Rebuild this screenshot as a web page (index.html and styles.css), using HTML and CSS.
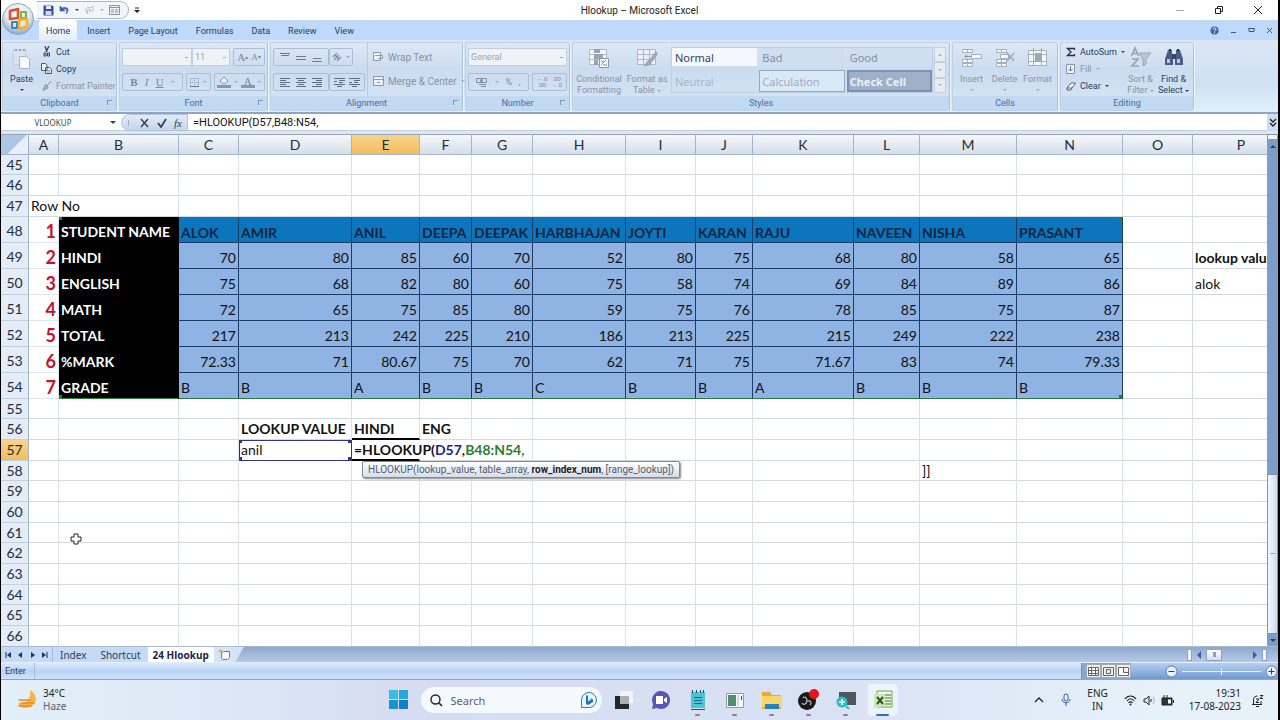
FILE: index.html
```html
<!DOCTYPE html>
<html lang="en">
<head>
  <meta charset="UTF-8" />
  <meta name="viewport" content="width=device-width, initial-scale=1.0"/>
  <title>Hlookup - Microsoft Excel</title>
  <link rel="stylesheet" href="styles.css">
</head>
<body>

<div class="desktop">

  <!-- title bar -->
  <header class="titlebar">
    <button class="office" aria-label="Office Button">
      <svg width="34" height="34" viewBox="0 0 34 34">
        <defs>
          <radialGradient id="orb" cx="50%" cy="30%" r="70%">
            <stop offset="0" stop-color="#fff"/><stop offset=".6" stop-color="#dfe5ee"/><stop offset="1" stop-color="#8fa3c0"/>
          </radialGradient>
        </defs>
        <circle cx="17" cy="17" r="15.5" fill="url(#orb)" stroke="#93a5c0"/>
        <g fill="none" stroke-width="2.6" stroke-linejoin="round">
          <path d="M9 9l8-2v9l-8 1z" stroke="#d9532c"/>
          <path d="M20 10h5v6h-5z" stroke="#7fb241" stroke-width="2"/>
          <path d="M11 20h5v6h-5z" stroke="#3e7fc6" stroke-width="2"/>
          <path d="M18 18l8-1v8l-8 2z" stroke="#f0b323"/>
        </g>
      </svg>
    </button>
    <div class="qat">
      <button aria-label="Save"><svg width="11" height="11" viewBox="0 0 11 11"><path d="M.5 .5h9l1 1v9H.5z" fill="#3d4f9c"/><path d="M3 1h5v3H3z" fill="#eef"/><path d="M2.500 6h6v4h-6z" fill="#cfd8ee"/></svg></button>
      <button aria-label="Undo"><svg width="11" height="11" viewBox="0 0 11 11"><path d="M1 1v5h5L4.500 4.500C7 3 9 5 7 9c4-4 2-8-4-6z" fill="#3f62b5" stroke="#3f62b5" stroke-width=".7"/></svg></button>
      <i class="caret"></i>
      <button aria-label="Redo"><svg width="11" height="11" viewBox="0 0 11 11"><path d="M9 1v5H5l1.500-1.500C4 3 2 5 4 9 0 5 2 1 7 3z" fill="#fff" stroke="#9aa6b8" stroke-width=".7"/></svg></button>
      <i class="caret pale"></i>
      <button aria-label="Form"><svg width="11" height="10" viewBox="0 0 11 10"><path d="M.5 .5h10v9H.5z" fill="#eef2f8" stroke="#8995aa"/><path d="M.5 2.500h10M2 5h3M2 7h3M6 5h3M6 7h3" stroke="#8995aa"/></svg></button>
    </div>
    <button class="qat-more" aria-label="Customize"><svg width="6" height="7" viewBox="0 0 6 7"><path d="M1 1h4" stroke="#222"/><path d="M0 3h6L3 6z" fill="#222"/></svg></button>
    <h1>Hlookup – Microsoft Excel</h1>
    <div class="window-buttons">
      <button aria-label="Minimize"><svg width="10" height="10"><path d="M1 5.500h8" stroke="#aaa"/></svg></button>
      <button aria-label="Restore"><svg width="10" height="10"><path d="M1.500 3.500h5v5h-5zM3.500 3V1.500h5v5H7" fill="none" stroke="#222"/></svg></button>
      <button aria-label="Close"><svg width="10" height="10"><path d="M1 1l8 8M9 1L1 9" stroke="#222"/></svg></button>
    </div>
  </header>

  <nav class="tabs">
    <a class="current" href="#home">Home</a>
    <a href="#insert">Insert</a>
    <a href="#layout">Page Layout</a>
    <a href="#formulas">Formulas</a>
    <a href="#data">Data</a>
    <a href="#review">Review</a>
    <a href="#view">View</a>
    <div class="book-buttons">
      <button aria-label="Help"><svg width="9" height="9" viewBox="0 0 9 9"><circle cx="4.500" cy="4.500" r="4" fill="#3b64b4"/><path d="M3 3.500c0-2 3-2 3 0 0 1-1.500 1-1.500 2M4.500 6.300v1" stroke="#fff" fill="none"/></svg></button>
      <button aria-label="Minimize workbook"><svg width="7" height="7"><path d="M1 5.500h5" stroke="#40598a"/></svg></button>
      <button aria-label="Restore workbook"><svg width="7" height="7"><path d="M.5 1.500h6M1 1v3.500h5V1" fill="none" stroke="#40598a"/></svg></button>
      <button aria-label="Close workbook"><svg width="7" height="7"><path d="M1 1l5 5M6 1L1 6" stroke="#40598a"/></svg></button>
    </div>
  </nav>

  <!-- ribbon -->
  <div class="ribbon">
    <section class="group clipboard">
      <div class="group-body">
        <button class="big on">
          <svg width="20" height="24" viewBox="0 0 20 24"><path d="M1 4h13v15H1z" fill="#d9e2ee" stroke="#c0cbd9"/><path d="M3 3h2v2H3zM7 3h2v2H7zM11 3h2v2h-2z" fill="#9ba6b4"/><path d="M7.500 10.500h7l3 3v9h-10z" fill="#f7f9fc" stroke="#aab5c5"/></svg>
          <span>Paste</span><i class="caret"></i>
        </button>
        <div class="stack">
          <button class="small on"><svg width="11" height="11" viewBox="0 0 11 11"><path d="M4 0l2 6M8 0L5 6" stroke="#33425e" stroke-width="1.300"/><path d="M3 7h2v3H3zM6.500 7h2v3h-2z" fill="none" stroke="#33425e"/></svg>Cut</button>
          <button class="small on"><svg width="11" height="11" viewBox="0 0 11 11"><path d="M.5 .5h4l1.500 2v5H.5zM4.500 4.500h4l2 2v4h-6z" fill="#f4f7fb" stroke="#44587c"/><path d="M6 7.500h3M6 9h3" stroke="#44587c" stroke-width=".6"/></svg>Copy</button>
          <button class="small"><svg width="11" height="11" viewBox="0 0 11 11"><path d="M10 1L6 6M6 5l1 3-5 2.500L4 5z" fill="#aab4c2" stroke="#8b96a6"/></svg>Format Painter</button>
        </div>
      </div>
      <h2>Clipboard<i class="launcher"></i></h2>
    </section>

    <section class="group font">
      <div class="group-body rows">
        <div class="row">
          <div class="joined"><select class="family" aria-label="Font"><option></option></select><select class="size" aria-label="Font size"><option>11</option></select></div>
          <div class="box"><button class="serif">A<sup>▴</sup></button><button class="serif sm">A<sup>▾</sup></button></div>
        </div>
        <div class="row">
          <div class="box wide"><button class="serif"><b>B</b></button><button class="serif"><em>I</em></button><button class="serif"><u>U</u></button><i class="caret pale"></i></div>
          <div class="box"><button aria-label="Borders"><svg width="9" height="9"><path d="M.5 .5h8v8h-8zM4.500 0v9M0 4.500h9" fill="none" stroke="#909db0" stroke-dasharray="1 1"/><path d="M0 8.500h9" stroke="#68758a"/></svg></button><i class="caret pale"></i></div>
          <div class="box wide"><button aria-label="Fill colour"><svg width="14" height="12" viewBox="0 0 14 12"><path d="M3 5l4-4 4 4-4 3z" fill="#eef2f7" stroke="#8793a5"/><path d="M0 9h14v3H0z" fill="#8b96a8"/></svg></button><i class="caret pale"></i><button class="font-colour serif">A</button><i class="caret pale"></i></div>
        </div>
      </div>
      <h2>Font<i class="launcher"></i></h2>
    </section>

    <section class="group alignment">
      <div class="group-body">
        <div class="rows">
          <div class="row tight">
            <div class="box three">
              <button aria-label="Top"><svg width="10" height="10"><path d="M0 1.500h10M1 3.500h8" stroke="#6d7a90"/></svg></button>
              <button aria-label="Middle"><svg width="10" height="10"><path d="M0 4.500h10M0 7.500h10" stroke="#6d7a90"/></svg></button>
              <button aria-label="Bottom"><svg width="10" height="10"><path d="M1 6.500h8M0 9.500h10" stroke="#6d7a90"/></svg></button>
            </div>
            <div class="box"><button aria-label="Orientation"><svg width="12" height="10" viewBox="0 0 12 10"><path d="M1 5l4-4M2 8l5-5M5 9l4-4M3 3l4 4" stroke="#7f8ba0" stroke-width="1.200"/></svg></button><i class="caret pale"></i></div>
          </div>
          <div class="row tight">
            <div class="box three">
              <button aria-label="Left"><svg width="10" height="10"><path d="M0 1.500h10M0 3.500h6M0 5.500h10M0 7.500h6M0 9.500h10" stroke="#5d6b85"/></svg></button>
              <button aria-label="Centre"><svg width="10" height="10"><path d="M0 1.500h10M2 3.500h6M0 5.500h10M2 7.500h6M0 9.500h10" stroke="#5d6b85"/></svg></button>
              <button aria-label="Right"><svg width="10" height="10"><path d="M0 1.500h10M4 3.500h6M0 5.500h10M4 7.500h6M0 9.500h10" stroke="#5d6b85"/></svg></button>
            </div>
            <div class="box two">
              <button aria-label="Decrease indent"><svg width="11" height="10"><path d="M0 1.500h11M5 3.500h6M5 5.500h4M0 7.500h11M3 9.500h5M0 4.500h3" stroke="#5d6b85"/></svg></button>
              <button aria-label="Increase indent"><svg width="11" height="10"><path d="M0 1.500h11M5 3.500h6M5 5.500h4M0 7.500h11M3 9.500h5M0 5.500h3" stroke="#5d6b85"/></svg></button>
            </div>
          </div>
        </div>
        <div class="rows divided">
          <button class="small tall"><svg width="11" height="10"><path d="M.5 .5h7v8h-7zM2 3.500h7.500v3H5" fill="#eef2f8" stroke="#8b98ac"/></svg>Wrap Text</button>
          <button class="small tall"><svg width="11" height="10"><path d="M.5 .5h10v9H.5zM.5 3.500h10M4 6.500h3" fill="#eef2f8" stroke="#8b98ac"/></svg>Merge &amp; Center <i class="caret pale"></i></button>
        </div>
      </div>
      <h2>Alignment<i class="launcher"></i></h2>
    </section>

    <section class="group number">
      <div class="group-body rows">
        <select class="format" aria-label="Number format"><option>General</option></select>
        <div class="row">
          <div class="box wide"><button aria-label="Currency"><svg width="12" height="10"><path d="M.5 1.500h10v4H.5zM3 7.500h7M5 9.500h5" fill="none" stroke="#7f8ca2"/><circle cx="5.500" cy="3.500" r="1.500" fill="#7f8ca2"/></svg></button><i class="caret pale"></i><button>%</button><button>,</button></div>
          <div class="box wide"><button class="dec">←.0<br>.00</button><button class="dec">.00<br>→.0</button></div>
        </div>
      </div>
      <h2>Number<i class="launcher"></i></h2>
    </section>

    <section class="group styles">
      <div class="group-body">
        <button class="big">
          <svg width="22" height="24" viewBox="0 0 22 24"><path d="M1.500 3.500h17v15h-17z" fill="#f3f6fa" stroke="#b2bcc9"/><path d="M1 8.500h18M1 13.500h18" stroke="#b2bcc9"/><path d="M6 3h6v4H6zM6 8h9v5H6zM6 14h4v5H6z" fill="#98a3b3"/><path d="M11.500 12.500h9v9h-9z" fill="#f7f9fb" stroke="#8d99aa"/><path d="M13 19l5-5M13 15l3 1M15 19h4" stroke="#7f8b9d"/></svg>
          <span>Conditional<br>Formatting <i class="caret pale"></i></span>
        </button>
        <button class="big">
          <svg width="22" height="24" viewBox="0 0 22 24"><path d="M1.500 3.500h18v15h-18zM1 8.500h18M1 13.500h18M7.500 3v16M13.500 3v16" fill="#edf1f6" stroke="#adb8c7"/><path d="M20 5l-7 9c-2 0-3 4-6 6 5 1 8-1 9-4l6-8z" fill="#9da8b8"/></svg>
          <span>Format as<br>Table <i class="caret pale"></i></span>
        </button>
        <div class="gallery">
          <button class="normal">Normal</button><button class="bad">Bad</button><button class="good">Good</button>
          <button class="neutral">Neutral</button><button class="calculation">Calculation</button><button class="check">Check Cell</button>
        </div>
        <div class="gallery-scroll"><button aria-label="Up"><i class="caret pale up"></i></button><button aria-label="Down"><i class="caret pale"></i></button><button aria-label="More"><i class="caret pale line"></i></button></div>
      </div>
      <h2>Styles</h2>
    </section>

    <section class="group cells">
      <div class="group-body">
        <button class="big">
          <svg width="22" height="24" viewBox="0 0 22 24"><path d="M1.500 3.500h10v3h-10zM1.500 13.500h10v3h-10zM1.500 17.500h10v3h-10zM6.500 3v3M6.500 13v8M10.500 8.500h10v4h-10z" fill="#f5f8fb" stroke="#a4b0c0"/><path d="M4 10.500h6M4 10.500l2-2M4 10.500l2 2" stroke="#8794a8"/></svg>
          <span>Insert</span><i class="caret pale"></i>
        </button>
        <button class="big">
          <svg width="22" height="24" viewBox="0 0 22 24"><path d="M2.500 3.500h10v3h-10zM2.500 13.500h10v3h-10zM2.500 17.500h10v3h-10zM7.500 3v3M7.500 13v8M6.500 8.500h8v4h-8z" fill="#f5f8fb" stroke="#a4b0c0"/><path d="M13 7l7 8M20 7l-7 8" stroke="#9da9b9" stroke-width="1.500"/></svg>
          <span>Delete</span><i class="caret pale"></i>
        </button>
        <button class="big">
          <svg width="22" height="24" viewBox="0 0 22 24"><path d="M1.500 4.500h18v15h-18zM6.500 2v18M14.500 2v18M1 8.500h19M1 15.500h19" fill="#f5f8fb" stroke="#a4b0c0"/><path d="M8 7h6v9H8z" fill="#9ba7b8"/></svg>
          <span>Format</span><i class="caret pale"></i>
        </button>
      </div>
      <h2>Cells</h2>
    </section>

    <section class="group editing">
      <div class="group-body">
        <div class="stack">
          <button class="small on"><svg width="10" height="10"><path d="M8.500 3V1.500H1.500L5 5 1.500 8.500h7V7" fill="none" stroke="#28334a" stroke-width="1.300"/></svg>AutoSum <i class="caret"></i></button>
          <button class="small"><svg width="10" height="10"><path d="M.5 .5h8v9h-8z" fill="#edf1f6" stroke="#8995a8"/><path d="M4.500 2v5M2.500 5l2 2 2-2" fill="none" stroke="#69778e"/></svg>Fill <i class="caret pale"></i></button>
          <button class="small on"><svg width="10" height="10"><path d="M1 7l4-5h4.500L6 7zM1 7v2h4l1-2" fill="#fff" stroke="#52627f"/></svg>Clear <i class="caret"></i></button>
        </div>
        <button class="big">
          <svg width="22" height="24" viewBox="0 0 22 24"><path d="M1.500 10L5 2l3.500 8M3 7.500h4M2 13h6l-6 7h7" fill="none" stroke="#99a4b5" stroke-width="1.700"/><path d="M9 7h12l-5 6v5l-3 2v-7z" fill="#bcc6d3" stroke="#9aa6b6"/></svg>
          <span>Sort &amp;<br>Filter <i class="caret pale"></i></span>
        </button>
        <button class="big on">
          <svg width="22" height="24" viewBox="0 0 22 24"><path d="M5 4h4v4l1 3v8H2v-6zM13 4h4l3 9v6h-8v-8l1-3z" fill="#4c5c87"/><path d="M9 8h4v5H9z" fill="#344468"/><path d="M4 13h3v4H4zM14 13h3v4h-3z" fill="#b9c6e4"/><path d="M6 4h2M14 4h2" stroke="#222d49" stroke-width="2"/></svg>
          <span>Find &amp;<br>Select <i class="caret"></i></span>
        </button>
      </div>
      <h2>Editing</h2>
    </section>
  </div>

  <!-- formula bar -->
  <div class="formula-bar">
    <input class="name-box" aria-label="Name box" value="VLOOKUP">
    <button class="name-drop" aria-label="Names"><i class="caret"></i></button>
    <div class="fx">
      <i class="grip"></i>
      <button aria-label="Cancel"><svg width="10" height="10"><path d="M1 1l7 8M8 1L1 9" stroke="#333c4c" stroke-width="1.400"/></svg></button>
      <button aria-label="Enter"><svg width="10" height="10"><path d="M1 5l3 4 5-8" fill="none" stroke="#333c4c" stroke-width="1.700"/></svg></button>
      <button aria-label="Insert function" class="serif"><em>fx</em></button>
    </div>
    <input class="formula" aria-label="Formula" value="=HLOOKUP(D57,B48:N54,">
    <button class="expand" aria-label="Expand"><svg width="8" height="10"><path d="M1 1l3 3 3-3M1 5l3 3 3-3" fill="none" stroke="#222" stroke-width="1.300"/></svg></button>
  </div>

  <!-- worksheet -->
  <main class="sheet">
    <div class="grid">
      <table>
        <colgroup>
          <col class="c-head"><col class="c-a"><col class="c-b"><col class="c-c"><col class="c-d"><col class="c-e"><col class="c-f"><col class="c-g"><col class="c-h"><col class="c-i"><col class="c-j"><col class="c-k"><col class="c-l"><col class="c-m"><col class="c-n"><col class="c-o"><col class="c-p">
        </colgroup>
        <thead>
          <tr><th class="corner"></th><th>A</th><th>B</th><th>C</th><th>D</th><th class="active">E</th><th>F</th><th>G</th><th>H</th><th>I</th><th>J</th><th>K</th><th>L</th><th>M</th><th>N</th><th>O</th><th>P</th></tr>
        </thead>
        <tbody>
          <tr class="short"><th>45</th><td><td><td><td><td><td><td><td><td><td><td><td><td><td><td><td></tr>
          <tr><th>46</th><td><td><td><td><td><td><td><td><td><td><td><td><td><td><td><td></tr>
          <tr><th>47</th><td class="spill">Row No<td><td><td><td><td><td><td><td><td><td><td><td><td><td><td></tr>
          <tr class="marks names"><th>48</th><td>1<td>STUDENT NAME<td>ALOK<td>AMIR<td>ANIL<td>DEEPA<td>DEEPAK<td>HARBHAJAN<td>JOYTI<td>KARAN<td>RAJU<td>NAVEEN<td>NISHA<td>PRASANT<td><td></tr>
          <tr class="marks"><th>49</th><td>2<td>HINDI<td>70<td>80<td>85<td>60<td>70<td>52<td>80<td>75<td>68<td>80<td>58<td>65<td><td><b>lookup value</b></tr>
          <tr class="marks"><th>50</th><td>3<td>ENGLISH<td>75<td>68<td>82<td>80<td>60<td>75<td>58<td>74<td>69<td>84<td>89<td>86<td><td>alok</tr>
          <tr class="marks"><th>51</th><td>4<td>MATH<td>72<td>65<td>75<td>85<td>80<td>59<td>75<td>76<td>78<td>85<td>75<td>87<td><td></tr>
          <tr class="marks"><th>52</th><td>5<td>TOTAL<td>217<td>213<td>242<td>225<td>210<td>186<td>213<td>225<td>215<td>249<td>222<td>238<td><td></tr>
          <tr class="marks"><th>53</th><td>6<td>%MARK<td>72.33<td>71<td>80.67<td>75<td>70<td>62<td>71<td>75<td>71.67<td>83<td>74<td>79.33<td><td></tr>
          <tr class="marks grades"><th>54</th><td>7<td>GRADE<td>B<td>B<td>A<td>B<td>B<td>C<td>B<td>B<td>A<td>B<td>B<td>B<td><td></tr>
          <tr class="short"><th>55</th><td><td><td><td><td><td><td><td><td><td><td><td><td><td><td><td></tr>
          <tr><th>56</th><td><td><td><td><b>LOOKUP VALUE</b><td class="ruled"><b>HINDI</b><td><b>ENG</b><td><td><td><td><td><td><td><td><td><td></tr>
          <tr><th class="active">57</th><td><td><td><td class="referenced">anil<td class="ruled editing-cell"><div class="editor">=HLOOKUP(<span class="ref-blue">D57</span>,<span class="ref-green">B48:N54,</span></div><div class="hint">HLOOKUP(lookup_value, table_array, <b>row_index_num</b>, [range_lookup])</div><td><td><td><td><td><td><td><td><td><td><td></tr>
          <tr class="short"><th>58</th><td><td><td><td><td><td><td><td><td><td><td><td><td>]]<td><td><td></tr>
          <tr><th>59</th><td><td><td><td><td><td><td><td><td><td><td><td><td><td><td><td></tr>
          <tr><th>60</th><td><td><td><td><td><td><td><td><td><td><td><td><td><td><td><td></tr>
          <tr class="short"><th>61</th><td><td><td><td><td><td><td><td><td><td><td><td><td><td><td><td></tr>
          <tr><th>62</th><td><td><td><td><td><td><td><td><td><td><td><td><td><td><td><td></tr>
          <tr><th>63</th><td><td><td><td><td><td><td><td><td><td><td><td><td><td><td><td></tr>
          <tr class="short"><th>64</th><td><td><td><td><td><td><td><td><td><td><td><td><td><td><td><td></tr>
          <tr><th>65</th><td><td><td><td><td><td><td><td><td><td><td><td><td><td><td><td></tr>
          <tr><th>66</th><td><td><td><td><td><td><td><td><td><td><td><td><td><td><td><td></tr>
        </tbody>
      </table>
      <svg class="pointer" width="12" height="12" viewBox="0 0 12 12"><path d="M4 1h4v3h3v4H8v3H4V8H1V4h3z" fill="#fff" stroke="#222"/></svg>
    </div>
    <div class="vscroll">
      <i class="split"></i>
      <button aria-label="Scroll up"><i class="caret up"></i></button>
      <div class="track"></div>
      <div class="thumb"></div>
      <button aria-label="Scroll down"><i class="caret"></i></button>
    </div>
  </main>

  <div class="sheet-tabs">
    <div class="sheet-nav">
      <button aria-label="First"><svg width="6" height="6"><path d="M1 0v6" stroke="#1d3564"/><path d="M6 0v6L2 3z" fill="#1d3564"/></svg></button>
      <button aria-label="Previous"><svg width="6" height="6"><path d="M5 0v6L1 3z" fill="#1d3564"/></svg></button>
      <button aria-label="Next"><svg width="6" height="6"><path d="M1 0v6l4-3z" fill="#1d3564"/></svg></button>
      <button aria-label="Last"><svg width="6" height="6"><path d="M0 0v6l4-3z" fill="#1d3564"/><path d="M5 0v6" stroke="#1d3564"/></svg></button>
    </div>
    <a href="#index">Index</a>
    <a href="#shortcut">Shortcut</a>
    <a class="current" href="#hlookup">24 Hlookup</a>
    <button class="new-sheet" aria-label="Insert worksheet"><svg width="13" height="12" viewBox="0 0 13 12"><path d="M3.500 2.500h8v6l-2 2h-5l-1-1z" fill="#f7f9fd" stroke="#667c9f"/><path d="M3 0v5M.5 2.500h5M1 1l4 3" stroke="#e0a848"/></svg></button>
    <div class="hscroll">
      <i class="stub"></i>
      <button aria-label="Scroll left"><svg width="6" height="8"><path d="M5 0v8L1 4z" fill="#3c5f9b"/></svg></button>
      <div class="thumb"></div>
      <button class="right" aria-label="Scroll right"><svg width="6" height="8"><path d="M1 0v8l4-4z" fill="#3c5f9b"/></svg></button>
      <i class="stub"></i>
    </div>
  </div>

  <div class="status">
    <span class="mode">Enter</span>
    <div class="views">
      <button aria-label="Normal view"><svg width="11" height="9"><path d="M.5 .5h10v8H.5zM.5 3.500h10M.5 6.500h10M3.500 0v9M7.500 0v9" fill="#fff" stroke="#666"/></svg></button>
      <button aria-label="Page layout view"><svg width="11" height="9"><path d="M.5 .5h10v8H.5zM3.500 2.500h4v4h-4z" fill="#eee" stroke="#666"/></svg></button>
      <button aria-label="Page break view"><svg width="11" height="9"><path d="M.5 .5h10v8H.5zM5.500 0v5.500h5" fill="#fff" stroke="#666"/></svg></button>
    </div>
    <div class="zoom">
      <button aria-label="Zoom out"><svg width="13" height="13"><circle cx="6.500" cy="6.500" r="5.500" fill="#e8f0fb" stroke="#5d7ba8"/><path d="M3.500 6.500h6" stroke="#2d405f"/></svg></button>
      <input type="range" aria-label="Zoom" min="0" max="100" value="50">
      <button aria-label="Zoom in"><svg width="13" height="13"><circle cx="6.500" cy="6.500" r="5.500" fill="#e8f0fb" stroke="#5d7ba8"/><path d="M3.500 6.500h6M6.500 3.500v6" stroke="#2d405f"/></svg></button>
    </div>
  </div>

  <!-- windows taskbar -->
  <footer class="taskbar">
    <div class="weather">
      <svg width="20" height="20" viewBox="0 0 20 20"><path d="M13 0c5 3 8 9 4 14S4 20 1 13c7 2 14-4 12-13z" fill="#f5b641"/><path d="M2 10h11M4 13h13M2 16h12" stroke="#e78a2b" stroke-width="1.500" stroke-linecap="round"/></svg>
      <div>34°C<br><span>Haze</span></div>
    </div>
    <div class="apps">
      <button aria-label="Start"><svg width="20" height="20"><path d="M0 0h9v9H0z" fill="#3cbbe9"/><path d="M10 0h9v9h-9z" fill="#27a7dd"/><path d="M0 10h9v9H0z" fill="#1b93d1"/><path d="M10 10h9v9h-9z" fill="#0e7fc4"/></svg></button>
      <label class="search">
        <svg width="13" height="13"><circle cx="5.500" cy="5.500" r="4.500" fill="none" stroke="#222" stroke-width="1.400"/><path d="M9 9l3 3" stroke="#222" stroke-width="1.600"/></svg>
        <input type="text" placeholder="Search" aria-label="Search">
        <svg width="18" height="18" viewBox="0 0 18 18"><path d="M1.500 16.500V9a7.500 7.500 0 1 1 7.500 7.500z" fill="#e9f7fc" stroke="#2a7fb5"/><path d="M6 4l2 1v5l3-1-1-2 3 1.500V11l-5 3-2-1z" fill="#1a76c0"/></svg>
      </label>
      <button aria-label="Task view"><svg width="20" height="20"><path d="M6 1h13v12H6z" fill="#f3f4f8"/><path d="M1 6h14v13H1z" fill="#252629"/><path d="M6 6h9v8H6z" fill="#aaaeb5"/></svg></button>
      <button aria-label="Chat"><svg width="20" height="20"><path d="M1 19l1-5a9 9 0 1 1 4 4z" fill="#5a56b5"/><path d="M5 6h7v8H5z" fill="#fff"/><path d="M13 9l3-2v6l-3-2z" fill="#fff"/></svg></button>
      <button class="open" aria-label="Notepad"><svg width="20" height="20"><path d="M3 2h14v16H3z" fill="#4cc3d9"/><path d="M6 7.500h8M6 10.500h8M6 13.500h8" stroke="#146b84"/><path d="M4.500 0v3M8.500 0v3M12.500 0v3M15.500 0v3" stroke="#2a4a5a"/><path d="M3 19.500h14" stroke="#a3222e"/></svg></button>
      <button class="open" aria-label="App"><svg width="20" height="20"><path d="M1.500 3.500h17v14h-17z" fill="#fafafa" stroke="#999"/><path d="M3 5h8v11H3z" fill="#4e8e79"/><path d="M12 5h2v11h-2z" fill="#cddbd5"/><path d="M16.500 6v4" stroke="#444"/></svg></button>
      <button class="open" aria-label="Explorer"><svg width="20" height="20"><path d="M0 2h8l2 3h9v14H0z" fill="#e9a93b"/><path d="M0 6h20v11H0z" fill="#fbd667"/><path d="M3 14h14v5H3z" fill="#2b7fc0"/></svg></button>
      <button class="open" aria-label="OBS"><svg width="22" height="22"><circle cx="9" cy="12" r="9" fill="#19191c"/><path d="M9 12c0-4-3-5-4-3M9 12c4-1 5 2 3 4M9 12c-1 4-4 4-5 2" fill="none" stroke="#bbb" stroke-width="1.200"/><circle cx="16" cy="5" r="5" fill="#e9121b"/></svg></button>
      <button class="open" aria-label="Magnifier"><svg width="20" height="20"><path d="M3 2h17v13H3z" fill="#4d565e"/><circle cx="6" cy="12" r="5.500" fill="#2bbcc5"/><path d="M3 12h6M6 9v6" stroke="#fff" stroke-width="1.500"/><path d="M10 16l3 3" stroke="#2bbcc5" stroke-width="2"/></svg></button>
      <button class="open focus" aria-label="Excel"><svg width="20" height="20"><path d="M4 1h15v16H4z" fill="#f2f9ec" stroke="#6fa34a"/><path d="M12 5h6M12 8h6M12 11h6M12 14h6" stroke="#6fa34a" stroke-width="1.500"/><path d="M1 4h11v12L1 18z" fill="#cfe6bd"/><path d="M4 7l6 7M10 7l-6 7" stroke="#245c1f" stroke-width="2"/></svg></button>
    </div>
    <div class="tray">
      <svg width="10" height="8"><path d="M1 6l4-4 4 4" fill="none" stroke="#222" stroke-width="1.300"/></svg>
      <svg class="mic" width="10" height="14"><rect x="3" y="1" width="4" height="7" rx="2" fill="#eaf3fd" stroke="#31599b"/><path d="M1 6c0 5 8 5 8 0M5 10v3" fill="none" stroke="#31599b"/></svg>
      <div class="lang">ENG<br>IN</div>
      <svg width="13" height="11"><path d="M1 4c3-4 8-4 11 0M3 6c2-3 5-3 7 0M4.500 8c1-1.500 3-1.500 4 0" fill="none" stroke="#222" stroke-width="1.200"/><circle cx="6.500" cy="9.500" r="1" fill="#222"/></svg>
      <svg width="12" height="11"><path d="M1 4h2l3-3v9L3 7H1z" fill="none" stroke="#222"/><path d="M8 4v3" stroke="#222"/><path d="M10 2c1.500 2 1.500 5 0 7" fill="none" stroke="#aab"/></svg>
      <svg width="14" height="11"><path d="M1 3h10v7H1z" fill="#333" stroke="#222"/><path d="M7 4.500h3v4H7z" fill="#fff"/><path d="M12.500 5v3M3 0v4M6 0v4" stroke="#222"/></svg>
      <div class="clock">19:31<br>17-08-2023</div>
      <svg width="13" height="13"><path d="M1 10.500h10M2.500 10V6c0-3 2-4 4-4M10 7v3M5 12.500h3" fill="none" stroke="#222"/><path d="M5 5h3l-3 3.500h3M9 1.500h3l-3 3h3" fill="none" stroke="#222"/></svg>
    </div>
  </footer>

</div>

</body>
</html>
```
FILE: styles.css
```css
* {
  box-sizing: border-box;
}

body {
  margin: 0;
  font-family: Roboto, sans-serif;
  font-size: 9px;
  color: #24405f;
}

button,
input,
select {
  margin: 0;
  padding: 0;
  border: 0;
  background: none;
  font: inherit;
  color: inherit;
}

button {
  display: flex;
  align-items: center;
  justify-content: center;
}

svg {
  flex: none;
}

a {
  color: inherit;
  text-decoration: none;
}

h1,
h2 {
  margin: 0;
  font-weight: normal;
}

.desktop {
  display: flex;
  flex-direction: column;
  height: 100vh;
  overflow: hidden;
  border-left: 1px solid #000;
  border-right: 2px solid #000;
}

.caret {
  display: inline-block;
  flex: none;
  vertical-align: middle;
  border: 2px solid transparent;
  border-top-color: #2d3f5c;
  border-bottom-width: 0;
}

.caret.pale {
  border-top-color: #a0adbf;
}

.caret.up {
  transform: rotate(180deg);
}

.serif {
  font-family: "Liberation Serif", serif;
  font-size: 11px;
}

/* title bar */

.titlebar {
  position: relative;
  display: flex;
  align-items: center;
  height: 20px;
  flex: none;
  padding-left: 36px;
  background: #fff;
  color: #222;
}

.office {
  position: absolute;
  left: 0;
  top: 2px;
  z-index: 2;
}

.qat {
  display: flex;
  align-items: center;
  gap: 5px;
  height: 18px;
  padding: 0 8px 0 6px;
  border: 1px solid #a9b8cd;
  border-left: 0;
  border-radius: 0 9px 9px 0;
  background: #f2f6fc;
}

.qat-more {
  margin-left: 5px;
}

.titlebar h1 {
  position: absolute;
  left: 0;
  right: 0;
  text-align: center;
  font-size: 10px;
  pointer-events: none;
}

.window-buttons {
  display: flex;
  gap: 29px;
  margin-left: auto;
  padding-right: 15px;
}

/* ribbon tabs */

.tabs {
  display: flex;
  align-items: stretch;
  flex: none;
  height: 20px;
  padding-left: 38px;
  background: #bfd9fb;
}

.tabs a {
  padding: 0 9px;
  line-height: 22px;
}

.tabs a.current {
  padding: 0 7px;
  margin-right: 1px;
  border-radius: 3px 3px 0 0;
  background: linear-gradient(#fff, #e3eefb);
}

.book-buttons {
  display: flex;
  gap: 11px;
  margin-left: auto;
  padding-right: 5px;
}

/* ribbon */

.ribbon {
  display: flex;
  flex: none;
  gap: 2px;
  height: 74px;
  padding: 2px 1px 1px;
  border-bottom: 2px solid #8ea6c6;
  background: linear-gradient(#dbe6f4, #cfe0f4 60%, #def0fb);
}

.group {
  display: flex;
  flex-direction: column;
  flex: none;
  border: 1px solid #bfd2ea;
  border-right-color: #a9c2e0;
  border-radius: 2px;
  box-shadow: 1px 0 0 #eef5fd;
  background: linear-gradient(#dde8f5, #cbdcf0 40%, #d7e6f6);
}

.clipboard { width: 115px; }
.font { width: 149px; }
.alignment { width: 193px; }
.number { width: 105px; }
.styles { width: 378px; }
.cells { width: 106px; }
.editing { width: 134px; }

.group h2 {
  position: relative;
  height: 14px;
  flex: none;
  background: #c1d9f1;
  font-size: 9px;
  line-height: 15px;
  text-align: center;
  color: #4a6d9f;
}

.launcher {
  position: absolute;
  right: 4px;
  top: 4px;
  width: 5px;
  height: 5px;
  border-left: 1px solid #7d98bf;
  border-top: 1px solid #7d98bf;
}

.group-body {
  display: flex;
  flex: 1;
  min-height: 0;
  padding: 0 2px;
}

.rows {
  display: flex;
  flex-direction: column;
  gap: 7px;
  padding-top: 5px;
}

.row {
  display: flex;
  gap: 3px;
}

.row.tight {
  gap: 0;
}

.joined {
  display: flex;
}

.box {
  display: flex;
  align-items: center;
  justify-content: space-evenly;
  height: 18px;
  border: 1px solid #a9bedb;
  border-radius: 2px;
  color: #7a8698;
}

.font .box {
  flex: 1 1 24px;
}

.font .box.wide {
  flex: 2 1 50px;
}

.font .box.wide:first-child {
  flex: 2 1 60px;
}

.box.three { width: 56px; }
.box.two { width: 36px; }
.tight .box:not(.three):not(.two) { width: 24px; }

.number .box.wide {
  flex: 1 1 35px;
}

.number .box.wide:first-child {
  flex: 1 1 60px;
}

.box sup {
  font-size: 6px;
  line-height: 6px;
}

.box .sm {
  font-size: 9px;
}

.font-colour {
  height: 12px;
  padding: 0 3px;
  border-bottom: 3px solid #8b96a8;
}

.dec {
  font-size: 6px;
  line-height: 6px;
}

select {
  height: 18px;
  padding: 0 2px;
  border: 1px solid #c3cfdf;
  background: #eff2f6 linear-gradient(#a0adbf, #a0adbf) no-repeat right 3px center / 3px 1px;
  color: #9aa5b3;
  appearance: none;
}

.family { width: 70px; }
.size { width: 38px; }

.format {
  width: 99px;
}

.divided {
  gap: 6px;
  margin-left: 2px;
  padding-left: 5px;
  border-left: 1px solid #b9cbe2;
}

.divided .small {
  font-size: 10px;
}

.big {
  flex-direction: column;
  justify-content: flex-start;
  align-self: flex-start;
  min-width: 33px;
  padding-top: 3px;
  line-height: 11px;
  color: #8793a6;
}

.big svg {
  margin-bottom: 4px;
}

.big > .caret {
  margin-top: 4px;
}

.big.on,
.small.on {
  color: #24405f;
}

.stack {
  display: flex;
  flex-direction: column;
  margin-left: 3px;
}

.small {
  justify-content: flex-start;
  gap: 4px;
  height: 17px;
  color: #8793a6;
  white-space: nowrap;
}

.small.tall {
  height: 18px;
}

.styles .big {
  width: 48px;
}

.gallery {
  display: grid;
  flex: 1;
  grid-template-columns: repeat(3, 1fr);
  gap: 4px 2px;
  margin: 4px 1px 3px 0;
  border: 1px solid #bccfe6;
  font-family: "Noto Sans", "Open Sans", sans-serif;
  font-size: 11px;
}

.gallery button {
  justify-content: flex-start;
  padding-left: 3px;
}

.normal { background: #f3f8fe; color: #33425a; }
.bad, .good { background: #cfdfef; color: #8592a6; }
.neutral { color: #a9b4c6; }

.gallery .calculation {
  padding-left: 2px;
  border: 1px solid #95a9c4;
  background: #dbe8f6;
  color: #9fadc3;
}

.gallery .check {
  padding-left: 1px;
  border: 2px solid #7e90ae;
  background: #a0b0c9;
  color: #eaf0f8;
  font-weight: bold;
}

.gallery-scroll {
  display: flex;
  flex-direction: column;
  width: 12px;
  margin: 4px 1px 3px 0;
  background: #e8edf4;
}

.gallery-scroll button {
  flex: 1;
  border: 1px solid #c5d0de;
}

.caret.line {
  box-shadow: 0 -3px 0 -1px #a0adbf;
}

.editing .stack {
  width: 58px;
}

/* formula bar */

.formula-bar {
  display: flex;
  align-items: stretch;
  flex: none;
  height: 20px;
  padding: 0;
  border-bottom: 3px solid #dfe6ee;
  background: #fff;
  box-shadow: inset 0 -1px 0 #c5d0dd;
}

.name-box {
  width: 104px;
  font-family: "Noto Sans", "Open Sans", sans-serif;
  font-size: 8px;
  text-align: center;
  color: #3c5130;
}

.name-drop {
  width: 16px;
}

.formula-bar .caret,
.vscroll .caret {
  border-width: 3px 3px 0;
}

.fx {
  display: flex;
  align-items: center;
  gap: 7px;
  width: 67px;
  padding-left: 6px;
  border: 1px solid #b3c3d8;
  border-radius: 9px 0 0 9px;
  background: linear-gradient(#e2ebf6, #c4d6ec);
  color: #333c4c;
}

.grip {
  width: 5px;
  height: 6px;
  border-left: 1px solid #9fb2cc;
}

.formula {
  flex: 1;
  min-width: 0;
  padding-left: 5px;
  font-size: 11px;
  color: #111;
}

.expand {
  width: 11px;
  background: #cddcf0;
}

/* worksheet */

.sheet {
  display: flex;
  flex: 1;
  min-height: 0;
}

.grid {
  position: relative;
  flex: 1;
  min-width: 0;
  overflow: hidden;
  background: #fff;
  font-family: Lato, sans-serif;
  font-size: 14px;
  color: #111;
}

table {
  width: 1289px;
  table-layout: fixed;
  border-spacing: 0;
}

.c-head { width: 28px; }
.c-a { width: 30px; }
.c-b { width: 120px; }
.c-c { width: 60px; }
.c-d { width: 113px; }
.c-e { width: 68px; }
.c-f { width: 52px; }
.c-g { width: 61px; }
.c-h { width: 93px; }
.c-i { width: 70px; }
.c-j { width: 57px; }
.c-k { width: 101px; }
.c-l { width: 66px; }
.c-m { width: 97px; }
.c-n { width: 106px; }
.c-o { width: 70px; }
.c-p { width: 97px; }

th {
  padding: 0;
  border-right: 1px solid #9eb6ce;
  border-bottom: 1px solid #c3d0e0;
  background: #e4ecf7;
  font-weight: normal;
  line-height: 18px;
  color: #222d3c;
}

td {
  height: 21px;
  padding: 0 2px;
  border-right: 1px solid #dbe1ea;
  border-bottom: 1px solid #d3d9e2;
  line-height: 18px;
  white-space: nowrap;
}

.short td {
  height: 20px;
}

thead th {
  height: 21px;
  border-top: 1px solid #93a6bf;
  border-bottom-color: #9eb6ce;
  background: linear-gradient(#f5f8fb, #d6dee9);
}

thead .corner {
  background: linear-gradient(135deg, #adc6e8 55%, #e6effa 55%);
}

th.active {
  background: linear-gradient(#f8d48d, #f2bd5c);
}

.spill {
  border-right-color: transparent;
}

/* marks table, columns B to N */

.marks th {
  padding-top: 2px;
}

.marks td {
  height: 26px;
  padding-top: 5px;
  border-right-color: #1c3c68;
  border-bottom-color: #1c3c68;
  background: #8fb3e2;
  text-align: right;
}

.marks td:nth-child(2) {
  padding-top: 2px;
  border-color: #e1e6ee;
  background: #fff;
  font-size: 18px;
  font-weight: bold;
  color: #c8102e;
}

.marks td:nth-child(3) {
  border-color: #000;
  background: #000;
  font-weight: bold;
  text-align: left;
  color: #fff;
}

.marks td:nth-child(n+16) {
  border-color: #d3d9e2;
  background: #fff;
  text-align: left;
}

.names td,
.grades td {
  text-align: left;
}

.names td:nth-child(n+4):nth-child(-n+15) {
  border-top: 1px solid #2c7c3c;
  background: #0c76bd;
  font-weight: bold;
  color: #0e2440;
}

.grades td:nth-child(n+3):nth-child(-n+15) {
  border-bottom-color: #2c7c3c;
}

.marks td:nth-child(2) {
  text-align: right;
}

/* green handles in the corners of the range */

.names td:nth-child(3) {
  background: linear-gradient(#2c7c3c, #2c7c3c) no-repeat left top / 3px 3px #000;
}

.names td:nth-child(n+15):nth-child(-n+15) {
  background: linear-gradient(#2c7c3c, #2c7c3c) no-repeat right top / 3px 3px #0c76bd;
}

.grades td:nth-child(3) {
  background: linear-gradient(#2c7c3c, #2c7c3c) no-repeat left bottom / 3px 3px #000;
}

.grades td:nth-child(15) {
  background: linear-gradient(#2c7c3c, #2c7c3c) no-repeat right bottom / 3px 3px #8fb3e2;
}

.ruled {
  border-bottom: 2px solid #000;
}

.referenced {
  outline: 1px solid #33338c;
  outline-offset: -1px;
  background:
    linear-gradient(#33338c, #33338c) no-repeat left top / 3px 3px,
    linear-gradient(#33338c, #33338c) no-repeat right top / 3px 3px,
    linear-gradient(#33338c, #33338c) no-repeat left bottom / 3px 3px,
    linear-gradient(#33338c, #33338c) no-repeat right bottom / 3px 3px;
}

.editing-cell {
  position: relative;
}

.editor {
  position: absolute;
  left: 0;
  top: 0;
  padding: 0 2px;
  background: #fff;
  font-weight: bold;
  line-height: 19px;
}

.ref-blue { color: #1c1c9c; }
.ref-green { color: #28802d; }

.hint {
  position: absolute;
  left: 10px;
  top: 21px;
  z-index: 1;
  padding: 0 5px;
  border: 1px solid #7f8896;
  border-radius: 2px;
  background: linear-gradient(#fff, #d5deec);
  box-shadow: 1px 1px 2px #888;
  font-family: Roboto, sans-serif;
  font-size: 10px;
  line-height: 15px;
  color: #555c68;
}

.hint b {
  color: #222;
}

.pointer {
  position: absolute;
  left: 69px;
  top: 399px;
}

.vscroll {
  display: flex;
  flex-direction: column;
  flex: none;
  width: 11px;
  background: #7d9cc8;
}

.split {
  height: 6px;
  border: 1px solid #7f95b5;
  background: #f2f6fb;
}

.vscroll button {
  height: 12px;
}

.vscroll .track {
  flex: 324;
}

.vscroll .thumb {
  flex: 159;
  border: 1px solid #7a93b8;
  background: linear-gradient(#9aaac4, #9aaac4) no-repeat center / 5px 1px, linear-gradient(90deg, #f4f8fc, #cfdcec);
}

/* sheet tabs */

.sheet-tabs {
  display: flex;
  align-items: stretch;
  flex: none;
  height: 17px;
  border-top: 1px solid #a8b9d2;
  border-bottom: 1px solid #e4edf8;
  background: linear-gradient(#8fa9cf, #b4cae8);
  font-family: "Noto Sans", "Open Sans", sans-serif;
  font-size: 10px;
  line-height: 16px;
}

.sheet-nav {
  display: flex;
  justify-content: space-around;
  width: 52px;
  padding: 0 1px;
  border-right: 1px solid #a5b8d4;
  background: #c5daf4;
}

.sheet-tabs a {
  padding: 0 7px;
  background: #c5daf4;
}

.sheet-tabs a.current {
  padding: 0 5px;
  background: #fff;
  font-weight: bold;
  color: #18244f;
}

.new-sheet {
  width: 30px;
  padding-right: 8px;
  background: #d5e4f7;
  clip-path: polygon(0 0, 100% 0, 72% 100%, 0 100%);
}

.hscroll {
  display: flex;
  align-items: center;
  width: 80px;
  margin-left: auto;
  margin-right: 11px;
}

.stub {
  width: 5px;
  height: 12px;
  border: 1px solid #8aa2c6;
  background: #f2f7fd;
}

.hscroll button {
  width: 14px;
}

.hscroll .thumb {
  width: 16px;
  height: 12px;
  border: 1px solid #8da0bd;
  background: linear-gradient(#8da0bd, #8da0bd) no-repeat center / 3px 5px, linear-gradient(#fff, #d4deec);
}

.hscroll .right {
  margin-left: auto;
}

/* status bar */

.status {
  display: flex;
  align-items: stretch;
  flex: none;
  height: 17px;
  border-bottom: 1px solid #8ba4c9;
  background: linear-gradient(#dbe9fb, #b9d3f4 50%, #cfe2f9);
  line-height: 16px;
}

.mode {
  width: 34px;
  padding-left: 4px;
  border-right: 1px solid #a5bddc;
}

.views {
  display: flex;
  margin-left: auto;
  padding: 1px 0 1px 4px;
  border-left: 1px solid #7893ba;
  background: #85a6d6;
}

.views button {
  width: 15px;
  border: 1px solid #a5aab3;
  background: #eee;
}

.zoom {
  display: flex;
  align-items: center;
  gap: 4px;
  padding-left: 34px;
  background: linear-gradient(#b5cff2, #7299d2);
}

.zoom input {
  width: 79px;
  height: 11px;
  background: linear-gradient(#e8f1fc, #e8f1fc) no-repeat center / 100% 1px, linear-gradient(#e8f1fc, #e8f1fc) no-repeat center / 1px 7px;
  appearance: none;
}

.zoom input::-webkit-slider-thumb {
  width: 1px;
  height: 7px;
  background: #e8f1fc;
  appearance: none;
}

/* taskbar */

.taskbar {
  display: flex;
  align-items: center;
  flex: none;
  height: 40px;
  background: linear-gradient(90deg, #e2eff8, #dce6f6 20%, #d6ddf2 30%, #d9e1f4 65%, #e6f1f9 90%);
  font-family: "Noto Sans", "Open Sans", sans-serif;
  font-size: 10px;
  line-height: 13px;
  color: #222;
}

.weather,
.tray {
  display: flex;
  align-items: center;
  flex: 1;
}

.weather {
  gap: 6px;
  padding-left: 16px;
}

.weather span {
  color: #596273;
}

.apps {
  display: flex;
  align-items: center;
  gap: 7px;
}

.apps button {
  position: relative;
  width: 30px;
  height: 32px;
  border-radius: 4px;
}

.open::after {
  content: "";
  position: absolute;
  bottom: 0;
  width: 5px;
  height: 2px;
  border-radius: 1px;
  background: #80868f;
}

.apps .focus {
  background: #edf3fa;
}

.focus::after {
  width: 13px;
  background: #2479b5;
}

.search {
  display: flex;
  align-items: center;
  gap: 8px;
  width: 181px;
  height: 26px;
  padding: 0 4px 0 9px;
  border-radius: 13px;
  background: #f5f8fd;
}

.search input {
  flex: 1;
  min-width: 0;
  font-size: 11px;
}

.search input::placeholder {
  color: #5a6068;
}

.tray {
  justify-content: flex-end;
  gap: 6px;
  padding-right: 14px;
}

.mic {
  margin-left: 11px;
}

.lang {
  margin: 0 10px;
  text-align: center;
}

.clock {
  margin: 0 4px 0 8px;
  text-align: right;
}
```
